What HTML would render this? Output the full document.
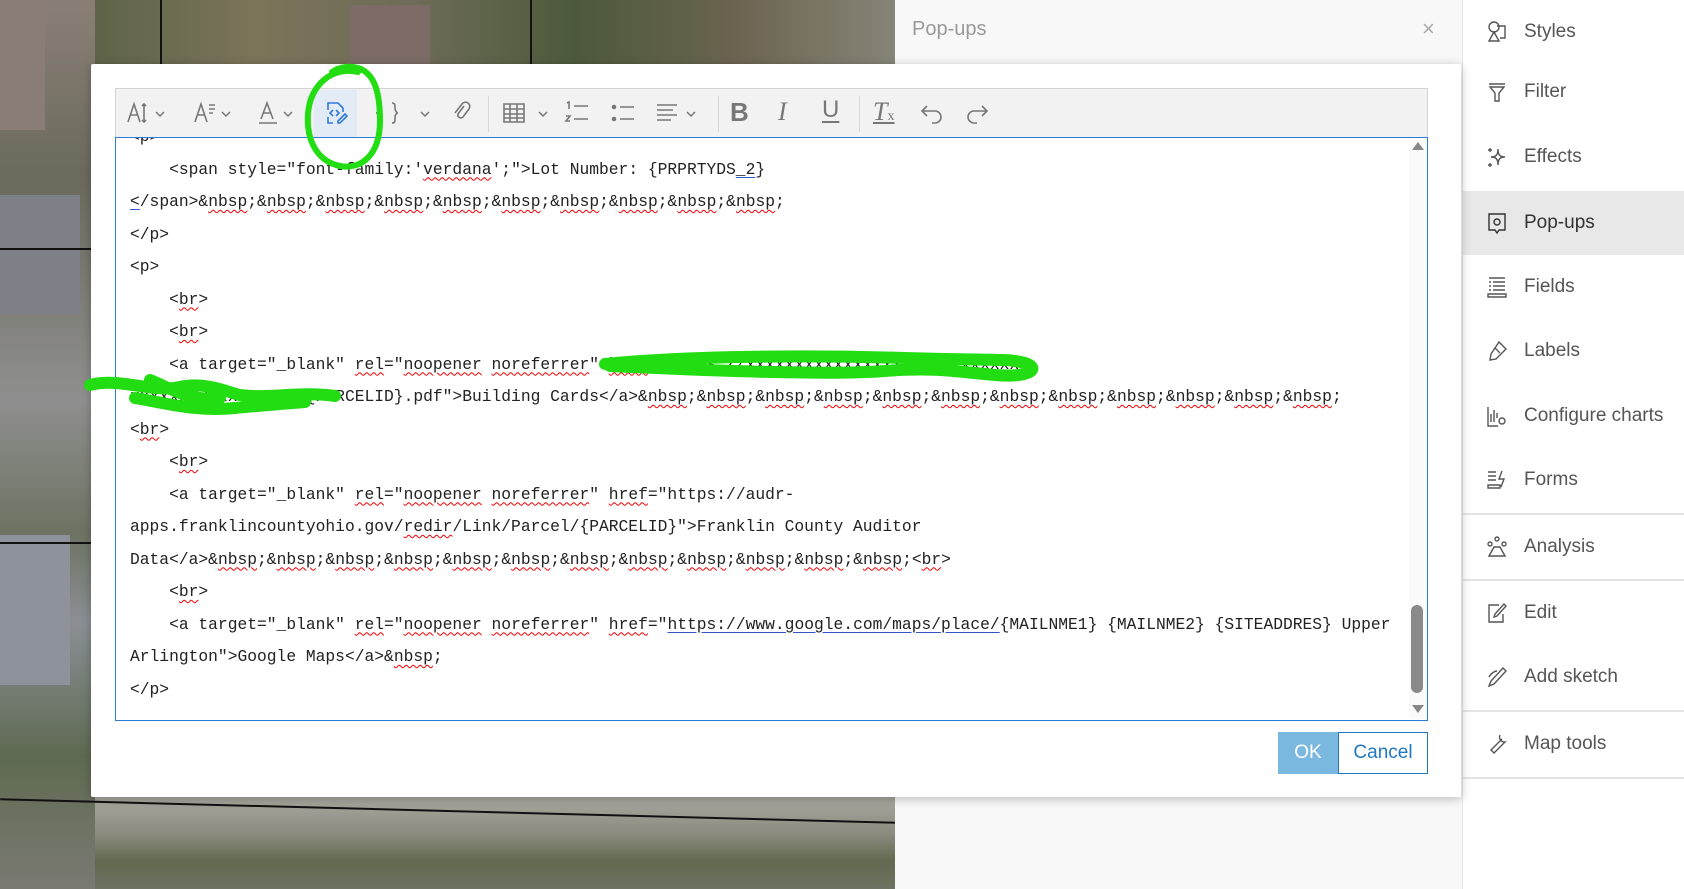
<!DOCTYPE html>
<html><head><meta charset="utf-8"><style>
*{margin:0;padding:0;box-sizing:border-box}
body{width:1684px;height:889px;overflow:hidden;position:relative;font-family:"Liberation Sans",sans-serif;background:#f8f8f8}
.map{position:absolute;left:0;top:0;width:895px;height:889px;background:#6f7460;overflow:hidden}
.map div{position:absolute}
.panelhead{position:absolute;left:895px;top:0;width:567px;height:889px;background:#f8f8f8}
.side{position:absolute;left:1462px;top:0;width:222px;height:889px;background:#fff;border-left:1px solid #e6e6e6}
.item{position:absolute;left:0;width:222px;height:64px;color:#555;font-size:19px;display:flex;align-items:center}
.item svg{position:absolute;left:22px;width:24px;height:24px;fill:none;stroke:#555;stroke-width:1.4}
.item span{position:absolute;left:61px}
.sep{position:absolute;left:0;width:222px;height:2px;background:#e4e4e4}
.dlg{position:absolute;left:91px;top:64px;width:1370px;height:733px;background:#fff;box-shadow:0 2px 10px rgba(0,0,0,.25);border-radius:2px}
.tb{position:absolute;left:115px;top:88px;width:1313px;height:49px;background:#f2f2f2;border:1px solid #d4d4d4;border-bottom:none}
.tb svg{position:absolute;top:11px;width:26px;height:26px;fill:none;stroke:#777;stroke-width:1.6}
.tb .chev{width:12px;height:12px;top:19px;stroke-width:1.5}
.tb .vs{position:absolute;top:7px;width:1px;height:36px;background:#d8d8d8}
.ed{position:absolute;left:115px;top:137px;width:1313px;height:584px;border:1px solid #2f7bd9;background:#fff;overflow:hidden}
pre{position:absolute;left:14px;top:-17px;font-family:"Liberation Mono",monospace;font-size:16.3px;line-height:32.5px;color:#222;white-space:pre}
.w{text-decoration:underline wavy #e00;text-decoration-thickness:1px;text-underline-offset:3px}
.u{text-decoration:underline solid #3355cc;text-underline-offset:3px}
.sb{position:absolute;left:1409px;top:140px;width:17px;height:578px;background:#fafafa}
</style></head><body>
<div class="map">
<div style="left:0;top:0;width:95px;height:889px;background:linear-gradient(#8a7f77,#6b6a5c 20%,#8f8f8f 45%,#6d7362 60%,#8b8f95 70%,#5f6a52 85%,#7a7a72)"></div>
<div style="left:0;top:0;width:45px;height:130px;background:#8a7d76"></div>
<div style="left:0;top:195px;width:80px;height:120px;background:#7d8086"></div>
<div style="left:0;top:535px;width:70px;height:150px;background:#8e939b"></div>
<div style="left:95px;top:0;width:800px;height:64px;background:linear-gradient(90deg,#5e6449,#7b7459 20%,#6d6c58 40%,#4d5a3a 60%,#6a6450 80%,#878478)"></div>
<div style="left:350px;top:5px;width:80px;height:59px;background:#7c6b66"></div>
<div style="left:95px;top:797px;width:800px;height:92px;background:linear-gradient(#a9a8a0,#8c8b7f 40%,#61694f 70%,#6f7363)"></div>
<div style="left:0;top:810px;width:895px;height:2px;background:#111;transform:rotate(1.5deg)"></div>
<div style="left:0;top:248px;width:95px;height:2px;background:#111"></div>
<div style="left:0;top:542px;width:95px;height:2px;background:#111"></div>
<div style="left:160px;top:0;width:2px;height:64px;background:#111"></div>
<div style="left:530px;top:0;width:2px;height:64px;background:#111"></div>
</div>
<div class="panelhead">
<div style="position:absolute;left:17px;top:18px;font-size:20px;color:#999">Pop-ups</div>
<div style="position:absolute;left:527px;top:16px;font-size:22px;color:#aaa">×</div>
</div>
<div class="side">
<div class="item" style="top:0"><svg viewBox="0 0 24 24"><circle cx="9" cy="7" r="5"/><path d="M4 21l5-9 5 9zM12 6h8v12h-5"/></svg><span>Styles</span></div>
<div class="item" style="top:60px"><svg viewBox="0 0 24 24"><path d="M4 4h16M5 7h14l-5 6v8h-4v-8z"/></svg><span>Filter</span></div>
<div class="item" style="top:125px"><svg viewBox="0 0 24 24"><path d="M13 4c0 6 2 8 7 8-5 0-7 2-7 8 0-6-2-8-7-8 5 0 7-2 7-8zM5 3v4M3 5h4M5 18v4M3 20h4"/></svg><span>Effects</span></div>
<div style="position:absolute;left:0;top:191px;width:222px;height:64px;background:#e8e8e8"></div>
<div class="item" style="top:191px"><svg viewBox="0 0 24 24" style="stroke:#333"><path d="M4 3h16v16h-6l-2 3-2-3H4z"/><circle cx="12" cy="11" r="3"/></svg><span style="color:#333">Pop-ups</span></div>
<div class="item" style="top:255px"><svg viewBox="0 0 24 24"><path d="M4 3h16M8 7h12M8 11h12M8 15h12M4 7h2M4 11h2M4 15h2M3 19h18v3H3z"/></svg><span>Fields</span></div>
<div class="item" style="top:319px"><svg viewBox="0 0 24 24"><path d="M14 3l7 7-10 10-6 1 1-6zM10 9l5 5"/></svg><span>Labels</span></div>
<div class="item" style="top:384px"><svg viewBox="0 0 24 24"><path d="M3 3v19h10M6 10v8M9 6v12M12 9v5"/><circle cx="17" cy="17" r="3"/></svg><span>Configure charts</span></div>
<div class="item" style="top:448px"><svg viewBox="0 0 24 24"><path d="M3 4h8M3 8h8M3 12h8M3 20h12v-3H3zM17 3l-3 8h5l-3 8"/></svg><span>Forms</span></div>
<div class="sep" style="top:513px"></div>
<div class="item" style="top:515px"><svg viewBox="0 0 24 24"><circle cx="5" cy="9" r="2"/><circle cx="12" cy="4" r="2"/><circle cx="19" cy="9" r="2"/><path d="M4 21l5-9h6l5 9z"/></svg><span>Analysis</span></div>
<div class="sep" style="top:579px"></div>
<div class="item" style="top:581px"><svg viewBox="0 0 24 24"><path d="M14 4H4v17h14v-8M19 3l2 2-9 10-3 1 1-3z"/></svg><span>Edit</span></div>
<div class="item" style="top:645px"><svg viewBox="0 0 24 24"><path d="M18 3l3 3-12 13-5 2 2-5zM4 12c2-4 6-6 8-6"/></svg><span>Add sketch</span></div>
<div class="sep" style="top:710px"></div>
<div class="item" style="top:712px"><svg viewBox="0 0 24 24"><path d="M15 3a5 5 0 0 0 5 7l-11 11-3-3 11-11"/></svg><span>Map tools</span></div>
<div class="sep" style="top:777px"></div>
</div>

<div class="dlg"></div>
<div class="tb">
<svg style="left:10px" viewBox="0 0 26 26"><path d="M2 22L8 4l6 18M4.5 15h7M18 4v18M16 6l2-2 2 2M16 20l2 2 2-2"/></svg><svg class="chev" style="left:38px" viewBox="0 0 12 12"><path d="M2 4l4 4 4-4"/></svg>
<svg style="left:77px" viewBox="0 0 26 26"><path d="M2 22L8 4l6 18M4.5 15h7M16 5h6M16 9h6M16 13h4"/></svg><svg class="chev" style="left:104px" viewBox="0 0 12 12"><path d="M2 4l4 4 4-4"/></svg>
<svg style="left:139px" viewBox="0 0 26 26"><path d="M6 19L12 3l6 16M8 13h8M4 23h18"/></svg><svg class="chev" style="left:166px" viewBox="0 0 12 12"><path d="M2 4l4 4 4-4"/></svg>
<div class="vs" style="left:191px"></div>
<div style="position:absolute;left:198px;top:1px;width:43px;height:47px;background:#e3ebf6"></div>
<svg style="left:207px;stroke:#2f7bd9" viewBox="0 0 26 26"><path d="M5 10V3h10l5 5v4M5 17v6h5M10 10l-3 3 3 3M13 10l3 3-3 3M22 14l2 2-7 7h-2v-2z"/></svg>
<svg style="left:258px" viewBox="0 0 26 26"><path d="M8 3c-3 0-3 2-3 5s-2 5-3 5c1 0 3 1 3 5s0 5 3 5M18 3c3 0 3 2 3 5s2 5 3 5c-1 0-3 1-3 5s0 5-3 5"/></svg><svg class="chev" style="left:303px" viewBox="0 0 12 12"><path d="M2 4l4 4 4-4"/></svg>
<svg style="left:334px" viewBox="0 0 26 26"><path d="M14 6l-6 8a3 3 0 0 0 5 3l6-8a4 4 0 0 0-7-5l-7 9"/></svg>
<div class="vs" style="left:372px"></div>
<svg style="left:385px" viewBox="0 0 26 26"><path d="M3 4h20v18H3zM3 9h20M3 14h20M3 18h20M9 4v18M16 4v18"/></svg><svg class="chev" style="left:421px" viewBox="0 0 12 12"><path d="M2 4l4 4 4-4"/></svg>
<svg style="left:448px" viewBox="0 0 26 26"><path d="M10 6h14M10 19h14M3 3l2-1v7M2 16h4l-4 5h4"/></svg>
<svg style="left:494px" viewBox="0 0 26 26"><path d="M10 7h14M10 19h14"/><circle cx="4" cy="7" r="1.5" fill="#777"/><circle cx="4" cy="19" r="1.5" fill="#777"/></svg>
<svg style="left:539px" viewBox="0 0 26 26"><path d="M2 5h20M2 10h16M2 15h20M2 20h14"/></svg><svg class="chev" style="left:569px" viewBox="0 0 12 12"><path d="M2 4l4 4 4-4"/></svg>
<div class="vs" style="left:602px"></div>
<div style="position:absolute;left:614px;top:8px;font-size:26px;font-weight:bold;color:#777">B</div>
<div style="position:absolute;left:662px;top:8px;font-size:26px;font-style:italic;font-family:'Liberation Serif',serif;color:#777">I</div>
<div style="position:absolute;left:706px;top:7px;font-size:24px;color:#777;text-decoration:underline;text-underline-offset:4px">U</div>
<div class="vs" style="left:743px"></div>
<div style="position:absolute;left:757px;top:8px;font-size:26px;font-style:italic;font-family:'Liberation Serif',serif;color:#777;text-decoration:underline">T<span style="font-size:14px;font-style:normal;text-decoration:none">x</span></div>
<svg style="left:803px" viewBox="0 0 26 26"><path d="M8 6l-5 5 5 5M3 11h13a6 6 0 0 1 0 12h-3"/></svg>
<svg style="left:848px" viewBox="0 0 26 26"><path d="M18 6l5 5-5 5M23 11H10a6 6 0 0 0 0 12h3"/></svg>
</div>
<div class="ed">
<pre>&lt;p&gt;
    &lt;span style="font-family:'<span class="w">verdana</span>';"&gt;Lot Number: {PRPRTYDS<span class="u">_2</span>}
<span class="u">&lt;</span>/span&gt;&amp;<span class="w">nbsp</span>;&amp;<span class="w">nbsp</span>;&amp;<span class="w">nbsp</span>;&amp;<span class="w">nbsp</span>;&amp;<span class="w">nbsp</span>;&amp;<span class="w">nbsp</span>;&amp;<span class="w">nbsp</span>;&amp;<span class="w">nbsp</span>;&amp;<span class="w">nbsp</span>;&amp;<span class="w">nbsp</span>;
&lt;/p&gt;
&lt;p&gt;
    &lt;<span class="w">br</span>&gt;
    &lt;<span class="w">br</span>&gt;
    &lt;a target="_blank" <span class="w">rel</span>="<span class="w">noopener</span> <span class="w">noreferrer</span>" <span class="w">href</span>="https://xxxxxxxxxxxxxxxxxxxxxxxxxxxx
xxxxxxxxxxxxxxxxxx{PARCELID}.pdf"&gt;Building Cards&lt;/a&gt;&amp;<span class="w">nbsp</span>;&amp;<span class="w">nbsp</span>;&amp;<span class="w">nbsp</span>;&amp;<span class="w">nbsp</span>;&amp;<span class="w">nbsp</span>;&amp;<span class="w">nbsp</span>;&amp;<span class="w">nbsp</span>;&amp;<span class="w">nbsp</span>;&amp;<span class="w">nbsp</span>;&amp;<span class="w">nbsp</span>;&amp;<span class="w">nbsp</span>;&amp;<span class="w">nbsp</span>;
&lt;<span class="w">br</span>&gt;
    &lt;<span class="w">br</span>&gt;
    &lt;a target="_blank" <span class="w">rel</span>="<span class="w">noopener</span> <span class="w">noreferrer</span>" <span class="w">href</span>="https://audr-
apps.franklincountyohio.gov/<span class="w">redir</span>/Link/Parcel/{PARCELID}"&gt;Franklin County Auditor
Data&lt;/a&gt;&amp;<span class="w">nbsp</span>;&amp;<span class="w">nbsp</span>;&amp;<span class="w">nbsp</span>;&amp;<span class="w">nbsp</span>;&amp;<span class="w">nbsp</span>;&amp;<span class="w">nbsp</span>;&amp;<span class="w">nbsp</span>;&amp;<span class="w">nbsp</span>;&amp;<span class="w">nbsp</span>;&amp;<span class="w">nbsp</span>;&amp;<span class="w">nbsp</span>;&amp;<span class="w">nbsp</span>;&lt;<span class="w">br</span>&gt;
    &lt;<span class="w">br</span>&gt;
    &lt;a target="_blank" <span class="w">rel</span>="<span class="w">noopener</span> <span class="w">noreferrer</span>" <span class="w">href</span>="<span class="u">https://www.google.com/maps/place/</span>{MAILNME1} {MAILNME2} {SITEADDRES} Upper
Arlington"&gt;Google Maps&lt;/a&gt;&amp;<span class="w">nbsp</span>;
&lt;/p&gt;</pre>
</div>
<div class="sb"><div style="position:absolute;left:3px;top:2px;width:0;height:0;border-left:6px solid transparent;border-right:6px solid transparent;border-bottom:8px solid #888"></div>
<div style="position:absolute;left:2px;top:465px;width:12px;height:88px;border-radius:6px;background:#8a8a8a"></div>
<div style="position:absolute;left:3px;top:565px;width:0;height:0;border-left:6px solid transparent;border-right:6px solid transparent;border-top:8px solid #888"></div></div>
<div style="position:absolute;left:1278px;top:732px;width:60px;height:42px;background:#7bb8df;color:#fff;font-size:19px;display:flex;align-items:center;justify-content:center">OK</div>
<div style="position:absolute;left:1338px;top:732px;width:90px;height:42px;border:1px solid #1f78c1;color:#1f78c1;font-size:19px;display:flex;align-items:center;justify-content:center;background:#fff">Cancel</div>
<svg style="position:absolute;left:0;top:0" width="1684" height="889">
<g fill="none" stroke="#22dd11" stroke-linecap="round" stroke-linejoin="round">
<path d="M358 72c-25-6-48 12-50 42-2 30 12 48 32 52 22 4 40-12 40-45 0-30-6-48-22-53-10-3-20 0-26 4" stroke-width="6"/>
<path d="M605 364c80-8 200-9 300-6s100 0 120 5c16 5 6 15-30 12s-60-8-110-4-170 0-275-5" stroke-width="12"/>
<path d="M90 385c30-8 60 8 90 2 25-6 50 6 60 8 30 4 60-4 95 1M135 398c30 5 60 14 100 10 20-2 45-4 70-6M150 380c20 8 40 22 70 18" stroke-width="12"/>
</g></svg>
</body></html>
